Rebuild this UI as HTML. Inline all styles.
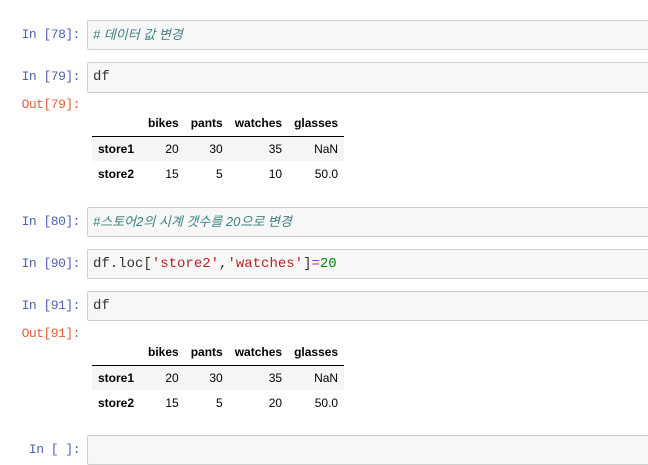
<html><head><style>
body{margin:0;width:648px;height:455px;background:#fff;position:relative;overflow:hidden;font-family:"Liberation Sans","Noto Sans CJK KR",sans-serif}
.p{position:absolute;right:568px;font-family:"Liberation Mono",monospace;font-size:13px;color:#5060b0;white-space:pre;letter-spacing:-0.5px}
.o{color:#e0603a}
.c{position:absolute;left:87px;width:580px;background:#f7f7f7;border:1px solid #cfcfcf;border-radius:2px;box-sizing:border-box;font-family:"Liberation Mono","Noto Sans CJK KR",monospace;font-size:14px;padding:5px 5px;color:#333;white-space:pre;line-height:18px}
.cm{color:#408080;font-style:italic;font-family:"Liberation Sans","Noto Sans CJK KR",sans-serif;font-size:13px}
table{position:absolute;left:92px;border-collapse:collapse;font-size:12px;color:#000}
th,td{text-align:right;padding:0 6px;height:25px}
thead th{font-weight:bold;border-bottom:1px solid #000;height:26px}
tbody th{text-align:left}
tbody tr:nth-child(1){background:#f5f5f5}
</style></head><body>
<div class="p" style="top:27px">In [78]:</div>
<div class="c" style="top:20px;height:30px"><span class="cm"># 데이터 값 변경</span></div>
<div class="p" style="top:69px">In [79]:</div>
<div class="c" style="top:62px;height:31px">df</div>
<div class="p o" style="top:97px">Out[79]:</div>
<table style="top:110px"><thead><tr><th style="width:38px"></th><th>bikes</th><th>pants</th><th>watches</th><th>glasses</th></tr></thead>
<tbody><tr><th>store1</th><td>20</td><td>30</td><td>35</td><td>NaN</td></tr><tr><th>store2</th><td>15</td><td>5</td><td>10</td><td>50.0</td></tr></tbody></table>
<div class="p" style="top:214px">In [80]:</div>
<div class="c" style="top:207px;height:30px"><span class="cm">#스토어2의 시계 갯수를 20으로 변경</span></div>
<div class="p" style="top:256px">In [90]:</div>
<div class="c" style="top:249px;height:30px">df.loc[<span style="color:#ba2121">'store2'</span>,<span style="color:#ba2121">'watches'</span>]<span style="color:#a2f">=</span><span style="color:#080">20</span></div>
<div class="p" style="top:298px">In [91]:</div>
<div class="c" style="top:291px;height:30px">df</div>
<div class="p o" style="top:326px">Out[91]:</div>
<table style="top:339px"><thead><tr><th style="width:38px"></th><th>bikes</th><th>pants</th><th>watches</th><th>glasses</th></tr></thead>
<tbody><tr><th>store1</th><td>20</td><td>30</td><td>35</td><td>NaN</td></tr><tr><th>store2</th><td>15</td><td>5</td><td>20</td><td>50.0</td></tr></tbody></table>
<div class="p" style="top:442px">In [ ]:</div>
<div class="c" style="top:435px;height:30px"></div>
</body></html>
